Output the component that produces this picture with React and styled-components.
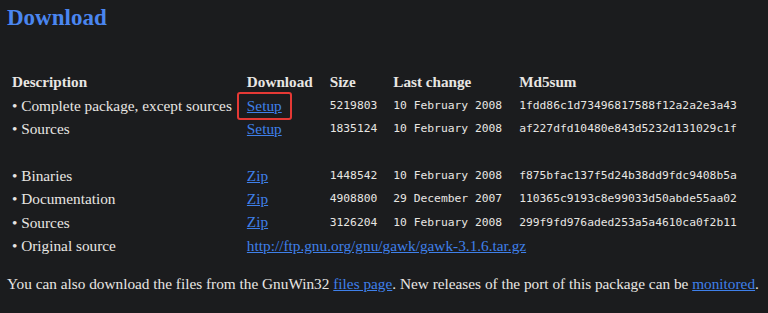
import styled, { createGlobalStyle } from "styled-components";

const GlobalStyle = createGlobalStyle`
  html, body {
    margin: 0;
    background: #1b1c1e;
  }
  body {
    color: #e8e6e3;
    font-family: "Liberation Serif", "Times New Roman", serif;
  }
`;

const rows = [
  { label: "Complete package, except sources", link: "Setup", size: "5219803", date: "10 February 2008", md5: "1fdd86c1d73496817588f12a2a2e3a43", boxed: true },
  { label: "Sources", link: "Setup", size: "1835124", date: "10 February 2008", md5: "af227dfd10480e843d5232d131029c1f" },
  null,
  { label: "Binaries", link: "Zip", size: "1448542", date: "10 February 2008", md5: "f875bfac137f5d24b38dd9fdc9408b5a" },
  { label: "Documentation", link: "Zip", size: "4908800", date: "29 December 2007", md5: "110365c9193c8e99033d50abde55aa02" },
  { label: "Sources", link: "Zip", size: "3126204", date: "10 February 2008", md5: "299f9fd976aded253a5a4610ca0f2b11" },
];

export default function App() {
  return (
    <>
      <GlobalStyle />
      <Page>
        <Title>Download</Title>
        <Table>
          <thead>
            <tr>
              <Head $gap={15}>Description</Head>
              <Head>Download</Head>
              <Head $gap={16}>Size</Head>
              <Head>Last change</Head>
              <Head>Md5sum</Head>
            </tr>
          </thead>
          <tbody>
            {rows.map((r, i) =>
              r ? (
                <tr key={i}>
                  <Cell $gap={15}>• {r.label}</Cell>
                  <Cell>
                    <LinkBox $boxed={r.boxed}>
                      <Link href="#">{r.link}</Link>
                    </LinkBox>
                  </Cell>
                  <Mono $gap={16}>{r.size}</Mono>
                  <Mono>{r.date}</Mono>
                  <Mono>{r.md5}</Mono>
                </tr>
              ) : (
                <Spacer key={i}>
                  <td colSpan={5} />
                </Spacer>
              )
            )}
            <tr>
              <Cell $gap={15}>• Original source</Cell>
              <Cell colSpan={4}>
                <Link href="#">http://ftp.gnu.org/gnu/gawk/gawk-3.1.6.tar.gz</Link>
              </Cell>
            </tr>
          </tbody>
        </Table>
        <Note>
          You can also download the files from the GnuWin32 <Link href="#">files page</Link>. New
          releases of the port of this package can be <Link href="#">monitored</Link>.
        </Note>
      </Page>
    </>
  );
}

const Page = styled.main`
  padding: 4px 7px 0;
`;

const Title = styled.h1`
  margin: 0 0 39px;
  color: #4a86f0;
  font-size: 23px;
  line-height: 27px;
  font-weight: bold;
`;

const Table = styled.table`
  border-collapse: collapse;
  margin-left: 5px;
`;

const Head = styled.th`
  text-align: left;
  font-size: 15.2px;
  font-weight: bold;
  padding: 0 ${(p) => p.$gap ?? 17}px 0 0;
  height: 24px;
  vertical-align: middle;
`;

const Cell = styled.td`
  font-size: 15.3px;
  line-height: 17px;
  padding: 0 ${(p) => p.$gap ?? 17}px 0 0;
  height: 23.3px;
  white-space: nowrap;
  vertical-align: middle;
`;

const Mono = styled(Cell)`
  font-family: "DejaVu Sans Mono", "Liberation Mono", monospace;
  font-size: 11.3px;
`;

const Spacer = styled.tr`
  height: 23.3px;
`;

const LinkBox = styled.span`
  display: inline-block;
  margin: -4px 0 -4px -10px;
  padding: 3px 8px 4px;
  border: 2px solid ${(p) => (p.$boxed ? "#e53935" : "transparent")};
  border-radius: 3px;
`;

const Link = styled.a`
  color: #3f80ea;
  text-decoration: underline;
`;

const Note = styled.p`
  margin: 18px 0 0;
  font-size: 15.3px;
`;
